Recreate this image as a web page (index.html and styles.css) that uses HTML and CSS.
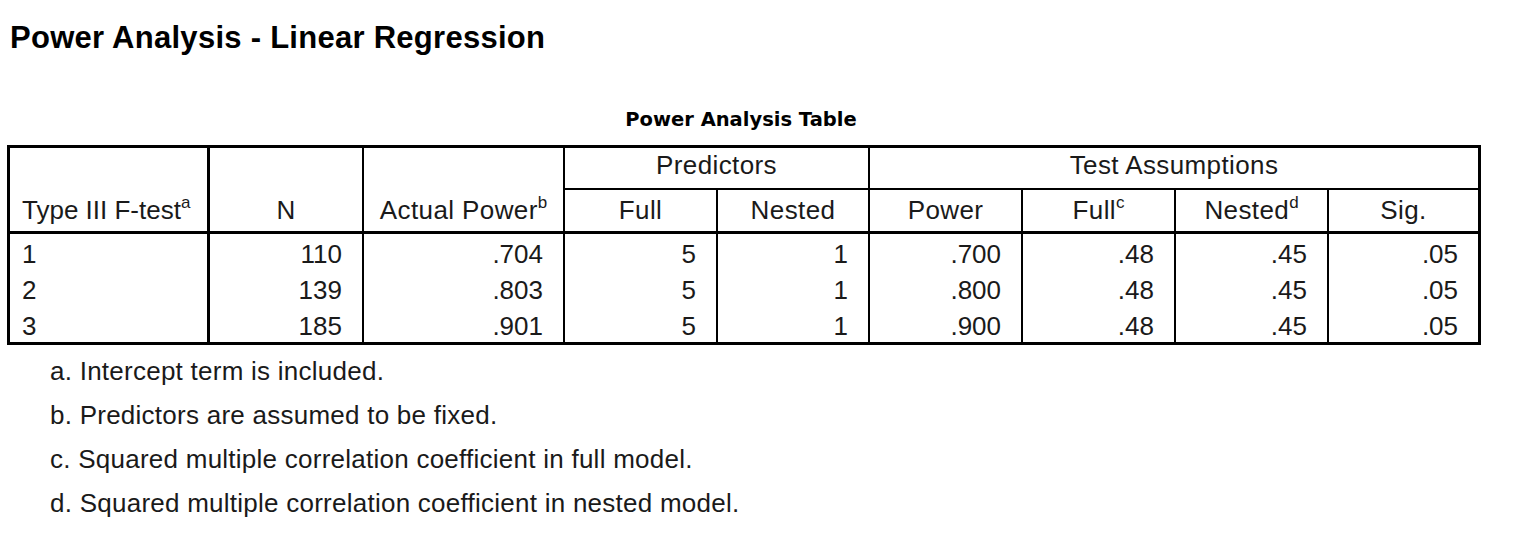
FILE: index.html
```html
<!DOCTYPE html>
<html>
<head>
<meta charset="utf-8">
<link rel="stylesheet" href="styles.css">
</head>
<body>
<div class="page">
  <h1 class="title">Power Analysis - Linear Regression</h1>
  <div class="tablewrap">
    <div class="caption">Power Analysis Table</div>
    <table class="grid">
      <colgroup>
        <col class="c1"><col class="c2"><col class="c3"><col class="c4"><col class="c5"><col class="c6"><col class="c7"><col class="c8"><col class="c9">
      </colgroup>
      <thead>
        <tr class="h1">
          <th rowspan="2" class="left thick">Type III F-test<sup>a</sup></th>
          <th rowspan="2">N</th>
          <th rowspan="2">Actual Power<sup>b</sup></th>
          <th colspan="2" class="group">Predictors</th>
          <th colspan="4" class="group last">Test Assumptions</th>
        </tr>
        <tr class="h2">
          <th>Full</th>
          <th>Nested</th>
          <th>Power</th>
          <th>Full<sup>c</sup></th>
          <th>Nested<sup>d</sup></th>
          <th class="last">Sig.</th>
        </tr>
      </thead>
      <tbody>
        <tr>
          <td class="left thick">1</td><td>110</td><td>.704</td><td>5</td><td>1</td><td>.700</td><td>.48</td><td>.45</td><td class="last">.05</td>
        </tr>
        <tr>
          <td class="left thick">2</td><td>139</td><td>.803</td><td>5</td><td>1</td><td>.800</td><td>.48</td><td>.45</td><td class="last">.05</td>
        </tr>
        <tr>
          <td class="left thick">3</td><td>185</td><td>.901</td><td>5</td><td>1</td><td>.900</td><td>.48</td><td>.45</td><td class="last">.05</td>
        </tr>
      </tbody>
    </table>
  </div>
  <ul class="notes">
    <li>a. Intercept term is included.</li>
    <li>b. Predictors are assumed to be fixed.</li>
    <li>c. Squared multiple correlation coefficient in full model.</li>
    <li>d. Squared multiple correlation coefficient in nested model.</li>
  </ul>
</div>
</body>
</html>
```

FILE: styles.css
```css
html, body {
  margin: 0;
  padding: 0;
  background: #fff;
}

.page {
  padding: 18px 0 0 7px;
  font-family: "Liberation Sans", Arial, sans-serif;
  color: #000;
}

.title {
  margin: 0 0 0 3px;
  font-size: 31px;
  line-height: 40px;
  letter-spacing: 0.27px;
  font-weight: bold;
}

.tablewrap {
  width: 1474px;
  margin-top: 50px;
}

.caption {
  text-align: center;
  font-family: "DejaVu Sans", sans-serif;
  font-weight: bold;
  font-size: 19.5px;
  line-height: 24px;
  margin: 0 0 13px 0;
  padding-right: 6px;
}

.grid {
  border-collapse: separate;
  border-spacing: 0;
  table-layout: fixed;
  width: 1474px;
  border: 3px solid #000;
  font-size: 26px;
  color: #1a1a1a;
}

.grid col.c1 { width: 200px; }
.grid col.c2 { width: 154px; }
.grid col.c3 { width: 201px; }
.grid col.c4 { width: 153px; }
.grid col.c5 { width: 152px; }
.grid col.c6 { width: 153px; }
.grid col.c7 { width: 153px; }
.grid col.c8 { width: 153px; }
.grid col.c9 { width: 149px; }

.grid th,
.grid td {
  box-sizing: border-box;
  padding: 0;
  border-right: 2px solid #000;
  white-space: nowrap;
  overflow: visible;
}

.grid th {
  font-weight: normal;
  text-align: center;
  vertical-align: bottom;
  letter-spacing: 0.4px;
}

.grid .last {
  border-right: none;
}

.grid .thick {
  border-right-width: 3px;
}

.grid .h1 th {
  height: 42px;
  line-height: 32px;
}

.grid .h1 th.group {
  border-bottom: 2px solid #000;
  vertical-align: top;
  padding-top: 1px;
}

.grid .h1 th[rowspan] {
  border-bottom: 3px solid #000;
  padding-bottom: 5px;
}

.grid .h2 th {
  height: 44px;
  border-bottom: 3px solid #000;
  padding-bottom: 5px;
  line-height: 32px;
}

.grid th.left {
  text-align: left;
  padding-left: 12px;
  letter-spacing: 0;
}

.grid td {
  height: 36px;
  text-align: right;
  vertical-align: bottom;
  line-height: 30px;
  padding-right: 20px;
  padding-bottom: 1px;
}

.grid td.left {
  text-align: left;
  padding-left: 12px;
  padding-right: 0;
}

.grid sup {
  font-size: 17px;
  line-height: 0;
  vertical-align: 11px;
  letter-spacing: 0;
}

.notes {
  list-style: none;
  margin: 4px 0 0 43px;
  padding: 0;
  font-size: 26px;
  line-height: 44px;
  letter-spacing: 0.25px;
  color: #1a1a1a;
}
```
